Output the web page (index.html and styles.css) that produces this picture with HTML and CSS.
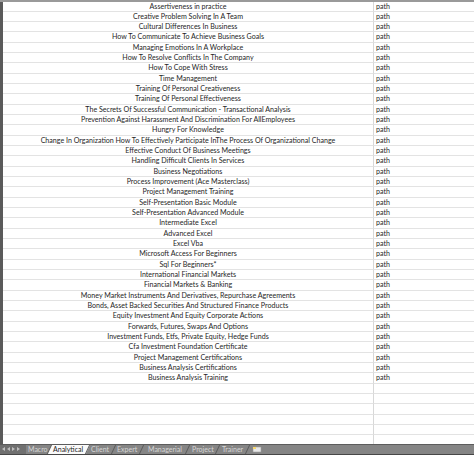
FILE: index.html
```html
<!DOCTYPE html>
<html>
<head>
<meta charset="utf-8">
<link rel="stylesheet" href="styles.css">
</head>
<body>
<div class="window">
  <div class="topbar"></div>
  <div class="main">
    <div class="leftedge"></div>
    <div class="sheet" id="sheet">
      <div class="a">Assertiveness in practice</div><div class="b">path</div>
      <div class="a">Creative Problem Solving In A Team</div><div class="b">path</div>
      <div class="a">Cultural Differences In Business</div><div class="b">path</div>
      <div class="a">How To Communicate To Achieve Business Goals</div><div class="b">path</div>
      <div class="a">Managing Emotions In A Workplace</div><div class="b">path</div>
      <div class="a">How To Resolve Conflicts In The Company</div><div class="b">path</div>
      <div class="a">How To Cope With Stress</div><div class="b">path</div>
      <div class="a">Time Management</div><div class="b">path</div>
      <div class="a">Training Of Personal Creativeness</div><div class="b">path</div>
      <div class="a">Training Of Personal Effectiveness</div><div class="b">path</div>
      <div class="a">The Secrets Of Successful Communication - Transactional Analysis</div><div class="b">path</div>
      <div class="a">Prevention Against Harassment And Discrimination For AllEmployees</div><div class="b">path</div>
      <div class="a">Hungry For Knowledge</div><div class="b">path</div>
      <div class="a">Change In Organization How To Effectively Participate InThe Process Of Organizational Change</div><div class="b">path</div>
      <div class="a">Effective Conduct Of Business Meetings</div><div class="b">path</div>
      <div class="a">Handling Difficult Clients In Services</div><div class="b">path</div>
      <div class="a">Business Negotiations</div><div class="b">path</div>
      <div class="a">Process Improvement (Ace Masterclass)</div><div class="b">path</div>
      <div class="a">Project Management Training</div><div class="b">path</div>
      <div class="a">Self-Presentation Basic Module</div><div class="b">path</div>
      <div class="a">Self-Presentation Advanced Module</div><div class="b">path</div>
      <div class="a">Intermediate Excel</div><div class="b">path</div>
      <div class="a">Advanced Excel</div><div class="b">path</div>
      <div class="a">Excel Vba</div><div class="b">path</div>
      <div class="a">Microsoft Access For Beginners</div><div class="b">path</div>
      <div class="a">Sql For Beginners*</div><div class="b">path</div>
      <div class="a">International Financial Markets</div><div class="b">path</div>
      <div class="a">Financial Markets &amp; Banking</div><div class="b">path</div>
      <div class="a">Money Market Instruments And Derivatives, Repurchase Agreements</div><div class="b">path</div>
      <div class="a">Bonds, Asset Backed Securities And Structured Finance Products</div><div class="b">path</div>
      <div class="a">Equity Investment And Equity Corporate Actions</div><div class="b">path</div>
      <div class="a">Forwards, Futures, Swaps And Options</div><div class="b">path</div>
      <div class="a">Investment Funds, Etfs, Private Equity, Hedge Funds</div><div class="b">path</div>
      <div class="a">Cfa Investment Foundation Certificate</div><div class="b">path</div>
      <div class="a">Project Management Certifications</div><div class="b">path</div>
      <div class="a">Business Analysis Certifications</div><div class="b">path</div>
      <div class="a">Business Analysis Training</div><div class="b">path</div>
      <div class="a"></div><div class="b"></div>
      <div class="a"></div><div class="b"></div>
      <div class="a"></div><div class="b"></div>
      <div class="a"></div><div class="b"></div>
      <div class="a"></div><div class="b"></div>
      <div class="a"></div><div class="b"></div>
    </div>
  </div>
  <div class="tabbar">
    <div class="nav">
      <span class="tri l"></span><span class="tri l"></span><span class="tri r"></span><span class="tri r"></span>
    </div>
    <div class="tab w-macro"><span>Macro</span></div>
    <div class="tab active w-anal"><span>Analytical</span></div>
    <div class="tab w-client"><span>Client</span></div>
    <div class="tab w-expert"><span>Expert</span></div>
    <div class="tab w-man"><span>Managerial</span></div>
    <div class="tab w-proj"><span>Project</span></div>
    <div class="tab w-train"><span>Trainer</span></div>
    <div class="tab newtab"><svg width="10" height="7" viewBox="0 0 10 7"><rect x="1" y="1" width="8" height="5" fill="#e8e8e8" stroke="#999" stroke-width="0.6"/><rect x="1" y="1" width="3" height="2" fill="#f6d870"/></svg></div>
  </div>
  <div class="bottom"></div>
</div>
</body>
</html>
```

FILE: styles.css
```css
html, body {
  margin: 0;
  padding: 0;
  background: #fff;
}
.window {
  width: 474px;
  height: 455px;
  overflow: hidden;
  display: flex;
  flex-direction: column;
  font-family: Lato, "Liberation Sans", sans-serif;
}
.topbar {
  height: 1.5px;
  background: #9a9a9a;
  flex: none;
}
.main {
  display: flex;
  flex: none;
  height: 442px;
}
.leftedge {
  width: 3px;
  background: #5a5a5a;
  flex: none;
}
.sheet {
  flex: 1;
  display: grid;
  grid-template-columns: 370px 1fr;
  grid-auto-rows: 10.33px;
  align-content: start;
  overflow: hidden;
}
.sheet > div {
  border-bottom: 1px solid #e3e3e3;
  box-sizing: border-box;
  font-size: 7.1px;
  line-height: 10.5px;
  color: #262626;
  white-space: nowrap;
}
.a {
  text-align: center;
}
.b {
  border-left: 1px solid #d8d8d8;
  padding-left: 2px;
}
.tabbar {
  flex: none;
  height: 9px;
  background: #858585;
  display: flex;
  align-items: stretch;
  font-size: 7px;
  line-height: 9px;
  color: #d6d6d6;
  border-top: 1px solid #5c5c5c;
}
.nav {
  width: 26px;
  flex: none;
  display: flex;
  align-items: center;
  gap: 2px;
  padding-left: 2px;
  box-sizing: border-box;
  background: #707070;
}
.tri {
  width: 0;
  height: 0;
  border-top: 2px solid transparent;
  border-bottom: 2px solid transparent;
}
.tri.l { border-right: 3px solid #c0c0c0; }
.tri.r { border-left: 3px solid #c0c0c0; }
.tab {
  flex: none;
  box-sizing: border-box;
  text-align: center;
  border-right: 1px solid #5a5a5a;
  transform: skewX(-25deg);
}
.tab span {
  display: inline-block;
  transform: skewX(25deg);
}
.tab.active {
  background: #fafafa;
  color: #222;
}
.w-macro { width: 24px; }
.w-anal { width: 38px; }
.w-client { width: 26px; }
.w-expert { width: 28px; }
.w-man { width: 46px; }
.w-proj { width: 30px; }
.w-train { width: 30px; }
.newtab {
  display: flex;
  align-items: center;
  justify-content: center;
  width: 18px;
  border-right: none;
}
.newtab svg {
  transform: skewX(25deg);
}
.bottom {
  flex: 1;
  background: #474747;
}
```
